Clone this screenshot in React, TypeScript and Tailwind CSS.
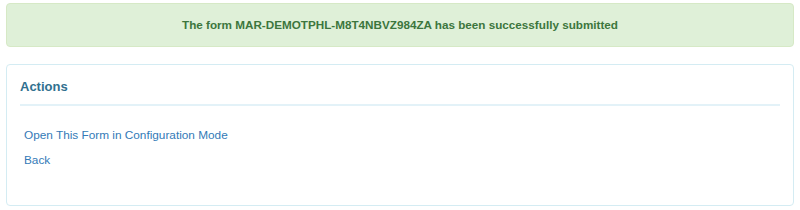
export default function App() {
  return (
    <div className="min-h-[210px] bg-white px-[6px] pt-[3px] font-['Liberation_Sans',Arial,sans-serif]">
      {/* Success banner */}
      <div className="flex h-[44px] items-center justify-center rounded-[4px] border border-[#d6e9c6] bg-[#dff0d8]">
        <span className="text-[11.7px] font-bold text-[#3c763d]">
          The form MAR-DEMOTPHL-M8T4NBVZ984ZA has been successfully submitted
        </span>
      </div>

      {/* Actions panel */}
      <div className="mt-[17px] h-[142px] rounded-[4px] border border-[#d4ecf3] px-[13px]">
        <div className="border-b-2 border-[#e3f2f8] pb-[9px] pt-[14px]">
          <h3 className="text-[13px] leading-[16px] font-bold text-[#31708f]">Actions</h3>
        </div>
        <div className="flex flex-col gap-[11px] pl-[4px] pt-[22px]">
          <a href="#" className="text-[11.8px] leading-[14px] text-[#337ab7]">Open This Form in Configuration Mode</a>
          <a href="#" className="text-[11.8px] leading-[14px] text-[#337ab7]">Back</a>
        </div>
      </div>
    </div>
  )
}
